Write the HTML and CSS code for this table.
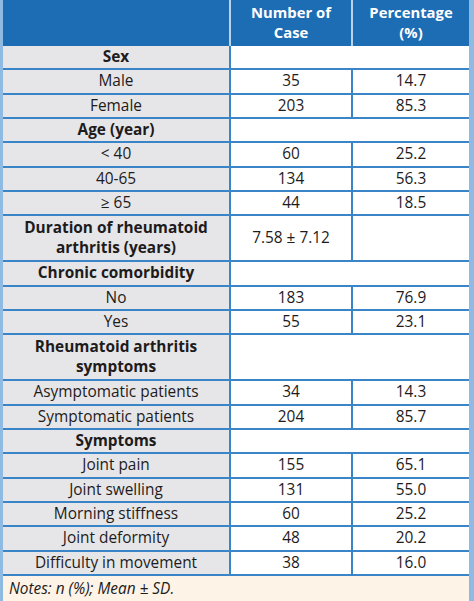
FILE: index.html
```html
<!DOCTYPE html>
<html>
<head>
<meta charset="utf-8">
<link rel="stylesheet" href="styles.css">
</head>
<body>
<div class="frame">
  <div class="row head">
    <div class="c hc"></div>
    <div class="c hc"><span class="hl">Number of</span><span class="hl">Case</span></div>
    <div class="c hc"><span class="hl">Percentage</span><span class="hl">(%)</span></div>
  </div>
  <div class="row"><div class="c lab b">Sex</div><div class="c span"></div></div>
  <div class="row"><div class="c lab">Male</div><div class="c">35</div><div class="c">14.7</div></div>
  <div class="row"><div class="c lab">Female</div><div class="c">203</div><div class="c">85.3</div></div>
  <div class="row"><div class="c lab b">Age (year)</div><div class="c span"></div></div>
  <div class="row"><div class="c lab">&lt; 40</div><div class="c">60</div><div class="c">25.2</div></div>
  <div class="row"><div class="c lab">40-65</div><div class="c">134</div><div class="c">56.3</div></div>
  <div class="row"><div class="c lab">&ge; 65</div><div class="c">44</div><div class="c">18.5</div></div>
  <div class="row tall"><div class="c lab b">Duration of rheumatoid<br>arthritis (years)</div><div class="c">7.58 &plusmn; 7.12</div><div class="c"></div></div>
  <div class="row"><div class="c lab b">Chronic comorbidity</div><div class="c span"></div></div>
  <div class="row"><div class="c lab">No</div><div class="c">183</div><div class="c">76.9</div></div>
  <div class="row"><div class="c lab">Yes</div><div class="c">55</div><div class="c">23.1</div></div>
  <div class="row tall"><div class="c lab b">Rheumatoid arthritis<br>symptoms</div><div class="c span"></div></div>
  <div class="row"><div class="c lab">Asymptomatic patients</div><div class="c">34</div><div class="c">14.3</div></div>
  <div class="row"><div class="c lab">Symptomatic patients</div><div class="c">204</div><div class="c">85.7</div></div>
  <div class="row"><div class="c lab b">Symptoms</div><div class="c span"></div></div>
  <div class="row"><div class="c lab">Joint pain</div><div class="c">155</div><div class="c">65.1</div></div>
  <div class="row"><div class="c lab">Joint swelling</div><div class="c">131</div><div class="c">55.0</div></div>
  <div class="row"><div class="c lab">Morning stiffness</div><div class="c">60</div><div class="c">25.2</div></div>
  <div class="row"><div class="c lab">Joint deformity</div><div class="c">48</div><div class="c">20.2</div></div>
  <div class="row"><div class="c lab">Difficulty in movement</div><div class="c">38</div><div class="c">16.0</div></div>
  <div class="notes">Notes: n (%); Mean &plusmn; SD.</div>
</div>
</body>
</html>
```
FILE: styles.css
```css
html, body {
  margin: 0;
  padding: 0;
  background: #ffffff;
}
.frame {
  width: 474px;
  height: 601px;
  box-sizing: border-box;
  border-left: 3px solid #8fbbe3;
  border-right: 5px solid #8fbbe3;
  background: #3a85c8;
  display: flex;
  flex-direction: column;
  gap: 2px;
  font-family: "Open Sans", "Liberation Sans", sans-serif;
  font-size: 15.4px;
  color: #1e1b1c;
}
.row {
  display: grid;
  grid-template-columns: 226px 120px 116px;
  column-gap: 2px;
  height: 22.33px;
}
.row.tall {
  height: 44px;
}
.row.head {
  height: 46px;
  background: #b9d3ec;
  margin-bottom: -2px;
}
.c {
  background: #ffffff;
  display: flex;
  align-items: center;
  justify-content: center;
  text-align: center;
  line-height: 20px;
}
.hc {
  background: #1d6db5;
  color: #ffffff;
  font-weight: 700;
  font-size: 14.8px;
  flex-direction: column;
  padding-bottom: 2px;
  box-sizing: border-box;
}
.hl {
  display: block;
  line-height: 20px;
}
.lab {
  background: #e6e6e8;
}
.b {
  font-weight: 700;
}
.span {
  grid-column: 2 / 4;
}
.notes {
  flex: 1;
  background: #fdf3e6;
  font-style: italic;
  padding-left: 6px;
  display: flex;
  align-items: center;
}
```
